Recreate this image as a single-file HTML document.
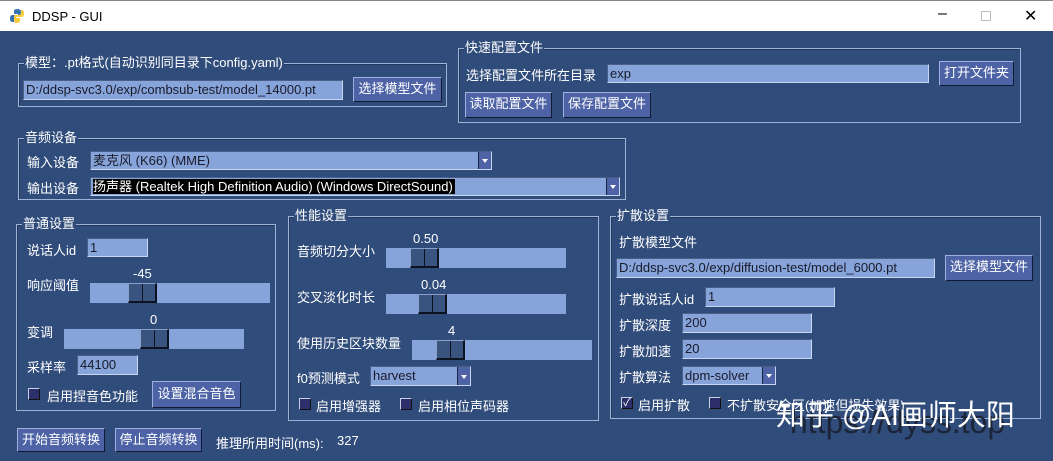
<!DOCTYPE html>
<html><head><meta charset="utf-8"><style>
*{box-sizing:border-box;margin:0;padding:0}
body{width:1053px;height:461px;overflow:hidden;background:#304c7b;font-family:"Liberation Sans","Noto Sans CJK SC",sans-serif;font-size:13px;color:#fff;position:relative}
.a{position:absolute;white-space:nowrap}
.tb{left:0;top:0;width:1053px;height:31px;background:#fff;color:#000;border-top:1px solid #888}
.fr{position:absolute;border:1px solid #9fb3d6;box-shadow:inset 1px 1px 0 #23395e}
.ft{position:absolute;top:-9px;left:5px;background:#304c7b;padding:0 1px;line-height:16px}
.in{position:absolute;background:#86a4da;color:#1a1a2a;border-top:1px solid #4a5f88;border-left:1px solid #4a5f88;border-bottom:1px solid #c8d6f0;border-right:1px solid #c8d6f0;padding-left:2px;line-height:17px;font-size:13px}
.bt{position:absolute;background:#4d63a6;border:1px solid #9fb0e0;border-right-color:#111a33;border-bottom-color:#111a33;text-align:center;line-height:22px}
.tr{position:absolute;background:#86a4da;height:20px}
.th{position:absolute;top:0;height:20px;width:29px;background:#3a5480;border-right:2px solid #0c1220;border-bottom:2px solid #0c1220;border-top:1px solid #8aa0c8;border-left:1px solid #8aa0c8}
.th:after{content:"";position:absolute;left:13px;top:0;width:1px;height:18px;background:#0c1220}
.ar{position:absolute;right:0;top:0;bottom:0;width:13px;background:#4d63a6;border-left:1px solid #1a2544}
.ar:after{content:"";position:absolute;left:3px;bottom:3px;border:3px solid transparent;border-top:4px solid #fff}
.cb{position:absolute;width:12px;height:12px;background:#2c2f6a;border:1px solid #c8d0e8;border-right-color:#111;border-bottom-color:#111}
</style></head><body>
<div class="a tb">
<svg style="position:absolute;left:9px;top:7px" width="16" height="16" viewBox="0 0 16 16"><path d="M8 1C5 1 5 2.5 5 4v2h4v1H3.5C2 7 1 8 1 10.5S2 14 3.5 14H5v-2.5C5 10 6 9 7.5 9h3C12 9 12 8 12 6.5V3.5C12 2 10.5 1 8 1z" fill="#3a73b0"/><path d="M8 15c3 0 3-1.5 3-3v-2H7V9h5.5C14 9 15 8 15 5.5S14 2 12.5 2H12v2.5C12 6 11 7 9.5 7h-3C5 7 5 8 5 9.5v3C5 14 5.5 15 8 15z" fill="#f7cc3c"/></svg>
<span class="a" style="left:32px;top:8px;font-size:13px">DDSP - GUI</span>
<span class="a" style="left:938px;top:4px;font-size:16px">–</span>
<div class="a" style="left:981px;top:10px;width:10px;height:10px;border:1px solid #bbb"></div>
<span class="a" style="left:1024px;top:5px;font-size:16px">✕</span>
</div>

<div class="fr" style="left:18px;top:63px;width:429px;height:44px"><span class="ft">模型：.pt格式(自动识别同目录下config.yaml)</span></div>
<div class="in" style="left:23px;top:80px;width:320px;height:20px">D:/ddsp-svc3.0/exp/combsub-test/model_14000.pt</div>
<div class="bt" style="left:353px;top:77px;width:89px;height:25px">选择模型文件</div>

<div class="fr" style="left:458px;top:48px;width:563px;height:75px"><span class="ft">快速配置文件</span></div>
<span class="a" style="left:466px;top:65px">选择配置文件所在目录</span>
<div class="in" style="left:607px;top:64px;width:322px;height:19px">exp</div>
<div class="bt" style="left:939px;top:61px;width:75px;height:25px">打开文件夹</div>
<div class="bt" style="left:465px;top:92px;width:87px;height:26px">读取配置文件</div>
<div class="bt" style="left:563px;top:92px;width:88px;height:26px">保存配置文件</div>

<div class="fr" style="left:18px;top:138px;width:608px;height:62px"><span class="ft">音频设备</span></div>
<span class="a" style="left:27px;top:152px">输入设备</span>
<div class="in" style="left:90px;top:151px;width:402px;height:19px">麦克风 (K66) (MME)<div class="ar"></div></div>
<span class="a" style="left:27px;top:178px">输出设备</span>
<div class="in" style="left:90px;top:177px;width:530px;height:19px"><span style="background:#000;color:#fff;padding-right:2px">扬声器 (Realtek High Definition Audio) (Windows DirectSound)</span><div class="ar"></div></div>

<div class="fr" style="left:16px;top:224px;width:260px;height:187px"><span class="ft">普通设置</span></div>
<span class="a" style="left:27px;top:240px">说话人id</span>
<div class="in" style="left:87px;top:238px;width:61px;height:19px">1</div>
<span class="a" style="left:27px;top:275px">响应阈值</span>
<span class="a" style="left:133px;top:266px">-45</span>
<div class="tr" style="left:90px;top:283px;width:180px"><div class="th" style="left:38px"></div></div>
<span class="a" style="left:27px;top:322px">变调</span>
<span class="a" style="left:150px;top:312px">0</span>
<div class="tr" style="left:64px;top:329px;width:180px"><div class="th" style="left:76px"></div></div>
<span class="a" style="left:27px;top:357px">采样率</span>
<div class="in" style="left:77px;top:355px;width:61px;height:20px">44100</div>
<div class="cb" style="left:28px;top:388px"></div>
<span class="a" style="left:47px;top:386px">启用捏音色功能</span>
<div class="bt" style="left:152px;top:381px;width:89px;height:27px;line-height:24px">设置混合音色</div>

<div class="fr" style="left:288px;top:216px;width:311px;height:205px"><span class="ft">性能设置</span></div>
<span class="a" style="left:297px;top:241px">音频切分大小</span>
<span class="a" style="left:413px;top:231px">0.50</span>
<div class="tr" style="left:386px;top:248px;width:180px"><div class="th" style="left:24px"></div></div>
<span class="a" style="left:297px;top:287px">交叉淡化时长</span>
<span class="a" style="left:421px;top:277px">0.04</span>
<div class="tr" style="left:386px;top:294px;width:180px"><div class="th" style="left:32px"></div></div>
<span class="a" style="left:297px;top:333px">使用历史区块数量</span>
<span class="a" style="left:448px;top:323px">4</span>
<div class="tr" style="left:412px;top:340px;width:180px"><div class="th" style="left:24px"></div></div>
<span class="a" style="left:297px;top:368px">f0预测模式</span>
<div class="in" style="left:370px;top:366px;width:101px;height:20px">harvest<div class="ar"></div></div>
<div class="cb" style="left:299px;top:398px"></div>
<span class="a" style="left:316px;top:396px">启用增强器</span>
<div class="cb" style="left:400px;top:398px"></div>
<span class="a" style="left:418px;top:396px">启用相位声码器</span>

<div class="fr" style="left:610px;top:216px;width:431px;height:203px"><span class="ft">扩散设置</span></div>
<span class="a" style="left:619px;top:232px">扩散模型文件</span>
<div class="in" style="left:616px;top:258px;width:319px;height:20px">D:/ddsp-svc3.0/exp/diffusion-test/model_6000.pt</div>
<div class="bt" style="left:945px;top:255px;width:88px;height:26px">选择模型文件</div>
<span class="a" style="left:619px;top:289px">扩散说话人id</span>
<div class="in" style="left:705px;top:287px;width:130px;height:20px">1</div>
<span class="a" style="left:619px;top:315px">扩散深度</span>
<div class="in" style="left:682px;top:313px;width:130px;height:20px">200</div>
<span class="a" style="left:619px;top:341px">扩散加速</span>
<div class="in" style="left:682px;top:339px;width:130px;height:20px">20</div>
<span class="a" style="left:619px;top:367px">扩散算法</span>
<div class="in" style="left:682px;top:366px;width:94px;height:19px">dpm-solver<div class="ar"></div></div>
<div class="cb" style="left:621px;top:397px;font-size:11px;line-height:10px;text-align:center;color:#fff">✓</div>
<span class="a" style="left:638px;top:395px">启用扩散</span>
<div class="cb" style="left:709px;top:397px"></div>
<span class="a" style="left:727px;top:395px">不扩散安全区(加速但损失效果)</span>

<div class="bt" style="left:17px;top:428px;width:88px;height:24px">开始音频转换</div>
<div class="bt" style="left:115px;top:428px;width:87px;height:24px">停止音频转换</div>
<span class="a" style="left:216px;top:433px">推理所用时间(ms):</span>
<span class="a" style="left:337px;top:433px">327</span>

<span class="a" style="left:790px;top:404px;font-size:32px;color:#1c2438">https://dyss.top</span>
<span class="a" style="left:776px;top:392px;font-size:29px;color:#fff">知乎 @AI画师大阳</span>
</body></html>
